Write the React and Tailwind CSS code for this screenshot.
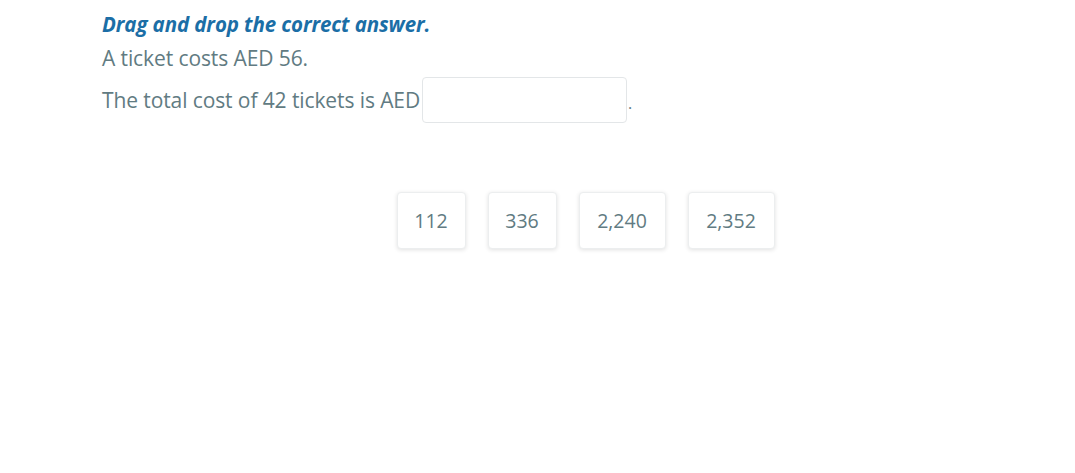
import React from 'react'

const choices = [
  { v: '112', w: 'w-[69px]' },
  { v: '336', w: 'w-[69px]' },
  { v: '2,240', w: 'w-[87px]' },
  { v: '2,352', w: 'w-[87px]' },
]

export default function App() {
  return (
    <div className="w-[1075px] h-[473px] bg-white font-['Open_Sans',sans-serif] text-[#617b82]">
      <div className="pl-[102px] pr-[6px] pt-[10px]">
        <h1 className="text-[20.5px] leading-[28px] font-bold italic text-[#1b6ea6] tracking-[-0.1px]">
          Drag and drop the correct answer.
        </h1>
        <p className="mt-[7px] text-[21px] leading-[26px] tracking-[-0.1px]">A ticket costs AED 56.</p>
        <div className="mt-[6px] flex items-center text-[21px] leading-[26px] tracking-[-0.1px]">
          <span>The total cost of 42 tickets is AED</span>
          <span className="ml-[2px] w-[205px] h-[46px] rounded-[4px] border border-[#e3e6e8] bg-white" />
          <span className="ml-[1px] mt-[6px] text-[16px]">.</span>
        </div>
        <div className="mt-[69px] flex justify-center gap-[22px]">
          {choices.map((c) => (
            <div
              key={c.v}
              className={`${c.w} h-[57px] flex items-center justify-center rounded-[4px] border border-[#eceeef] bg-white shadow-[0_1px_4px_rgba(0,0,0,0.12)] text-[19.5px]`}
            >
              {c.v}
            </div>
          ))}
        </div>
      </div>
    </div>
  )
}
